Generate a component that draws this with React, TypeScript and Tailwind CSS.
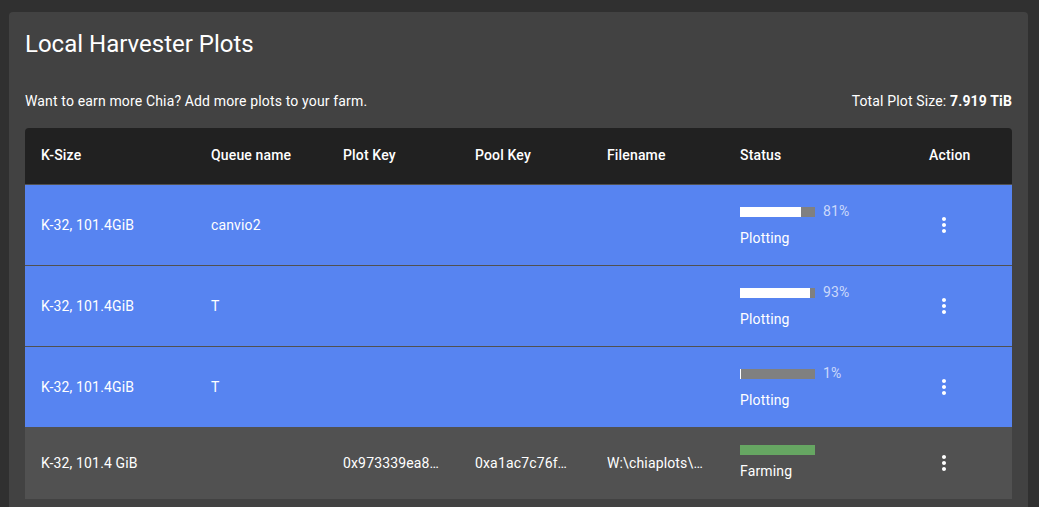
type Plot = {
  size: string
  queue: string
  plotKey: string
  poolKey: string
  filename: string
  state: 'plotting' | 'farming'
  progress?: number
}

const PLOTS: Plot[] = [
  { size: 'K-32, 101.4GiB', queue: 'canvio2', plotKey: '', poolKey: '', filename: '', state: 'plotting', progress: 81 },
  { size: 'K-32, 101.4GiB', queue: 'T', plotKey: '', poolKey: '', filename: '', state: 'plotting', progress: 93 },
  { size: 'K-32, 101.4GiB', queue: 'T', plotKey: '', poolKey: '', filename: '', state: 'plotting', progress: 1 },
  {
    size: 'K-32, 101.4 GiB',
    queue: '',
    plotKey: '0x973339ea8b5c2f0e71d4a6',
    poolKey: '0xa1ac7c76fd3e2b8a40c11',
    filename: 'W:\\chiaplots\\plot-k32-2021-05-12.plot',
    state: 'farming',
  },
]

const HEADERS = ['K-Size', 'Queue name', 'Plot Key', 'Pool Key', 'Filename', 'Status', 'Action']

const GRID = 'grid grid-cols-[170px_132px_132px_132px_133px_189px_1fr]'

function KebabIcon() {
  return (
    <svg width="24" height="24" viewBox="0 0 24 24" fill="white" aria-hidden>
      <path d="M12 8c1.1 0 2-.9 2-2s-.9-2-2-2-2 .9-2 2 .9 2 2 2zm0 2c-1.1 0-2 .9-2 2s.9 2 2 2 2-.9 2-2-.9-2-2-2zm0 6c-1.1 0-2 .9-2 2s.9 2 2 2 2-.9 2-2-.9-2-2-2z" />
    </svg>
  )
}

function StatusCell({ plot }: { plot: Plot }) {
  if (plot.state === 'farming') {
    return (
      <div className="-mt-px flex flex-col">
        <div className="h-2.5 w-[75px] bg-[#66a662]" />
        <span className="mt-[6px] leading-5">Farming</span>
      </div>
    )
  }
  const pct = plot.progress ?? 0
  return (
    <div className="-mt-px flex flex-col">
      <div className="flex h-5 items-center gap-2">
        <div className="h-2.5 w-[75px] bg-[#808080]">
          <div className="h-full bg-white" style={{ width: `${pct}%` }} />
        </div>
        <span className="-mt-px text-white/70">{pct}%</span>
      </div>
      <span className="mt-[6px] leading-5">Plotting</span>
    </div>
  )
}

export default function App() {
  return (
    <div
      className="min-h-[507px] bg-[#303030] pt-3 pr-[11px] pl-[9px] text-white"
      style={{ fontFamily: 'Roboto, "Noto Sans", sans-serif' }}
    >
      <div className="min-h-[495px] rounded-t bg-[#424242] px-4 pt-4">
        <h1 className="text-2xl leading-8 font-normal">Local Harvester Plots</h1>

        <div className="mt-[31px] flex items-center justify-between text-sm leading-5 tracking-[0.01071em]">
          <span>Want to earn more Chia? Add more plots to your farm.</span>
          <span>
            Total Plot Size: <span className="font-bold">7.919 TiB</span>
          </span>
        </div>

        {/* Table */}
        <div className="mt-[17px] text-sm tracking-[0.01071em]">
          <div className={`${GRID} h-[57px] items-center rounded-t border-b border-[#515151] bg-[#212121] pb-[2px] font-medium`}>
            {HEADERS.map((h) => (
              <div key={h} className="px-4">
                {h}
              </div>
            ))}
          </div>

          {PLOTS.map((p, i) => (
            <div
              key={i}
              className={`${GRID} items-center ${
                p.state === 'plotting'
                  ? 'h-[81px] border-b border-[#515151] bg-[#5784f1]'
                  : 'h-[71px] bg-[#515151] pb-px'
              }`}
            >
              <div className="px-4">{p.size}</div>
              <div className="px-4">{p.queue}</div>
              <div className="px-4">
                <div className="truncate">{p.plotKey}</div>
              </div>
              <div className="px-4">
                <div className="w-[94px] truncate">{p.poolKey}</div>
              </div>
              <div className="px-4">
                <div className="truncate">{p.filename}</div>
              </div>
              <div className="px-4">
                <StatusCell plot={p} />
              </div>
              <div className="pl-[19px]">
                <KebabIcon />
              </div>
            </div>
          ))}
        </div>
      </div>
    </div>
  )
}
